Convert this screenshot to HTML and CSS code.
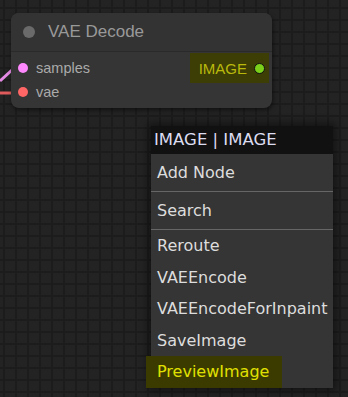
FILE: index.html
```html
<!DOCTYPE html>
<html>
<head>
<meta charset="utf-8">
<link rel="stylesheet" href="styles.css">
</head>
<body>
<div class="canvas">
  <svg class="wires" width="348" height="397" viewBox="0 0 348 397">
    <path d="M0 81 L12 70" stroke="#e58ae5" stroke-width="3" fill="none"/>
    <path d="M0 93 L12 93" stroke="#e05c5c" stroke-width="3" fill="none"/>
  </svg>
  <div class="node">
    <div class="node-title">
      <span class="title-dot"></span>
      <span class="title-text">VAE Decode</span>
    </div>
    <div class="node-body">
      <div class="slot-row">
        <div class="slot-in"><span class="dot dot-pink"></span><span>samples</span></div>
        <div class="slot-out"><span class="out-label">IMAGE</span><span class="dot dot-green"></span></div>
      </div>
      <div class="slot-row">
        <div class="slot-in"><span class="dot dot-red"></span><span>vae</span></div>
      </div>
    </div>
  </div>
  <div class="menu">
    <div class="menu-title">IMAGE | IMAGE</div>
    <div class="menu-item sep">Add Node</div>
    <div class="menu-item sep">Search</div>
    <div class="menu-item">Reroute</div>
    <div class="menu-item">VAEEncode</div>
    <div class="menu-item">VAEEncodeForInpaint</div>
    <div class="menu-item">SaveImage</div>
    <div class="menu-item hl">PreviewImage</div>
  </div>
</div>
</body>
</html>
```
FILE: styles.css
```css
html, body {
  margin: 0;
  padding: 0;
}
body {
  width: 348px;
  height: 397px;
  overflow: hidden;
  background: #222;
}
.canvas {
  position: relative;
  width: 348px;
  height: 397px;
  background-color: #232323;
  background-image:
    linear-gradient(to right, #1c1c1c 0, #1c1c1c 2px, transparent 2px),
    linear-gradient(to bottom, #1c1c1c 0, #1c1c1c 2px, transparent 2px);
  background-size: 12px 12px;
  background-position: 3px 7px;
  font-family: "Liberation Sans", Arial, sans-serif;
}
.wires {
  position: absolute;
  left: 0;
  top: 0;
}
.node {
  position: absolute;
  left: 11px;
  top: 13px;
  width: 261px;
  height: 95px;
  background: #353535;
  border-radius: 8px;
  box-shadow: 1px 2px 4px rgba(0,0,0,0.5);
  overflow: hidden;
}
.node-title {
  height: 38px;
  display: flex;
  align-items: center;
  border-bottom: 1px solid #2a2a2a;
  background: #333;
}
.title-dot {
  width: 12px;
  height: 12px;
  border-radius: 50%;
  background: #6a6a6a;
  margin-left: 12px;
}
.title-text {
  margin-left: 13px;
  font-size: 17px;
  color: #999;
}
.node-body {
  padding-top: 4px;
}
.slot-row {
  height: 24px;
  display: flex;
  align-items: center;
  justify-content: space-between;
  font-size: 14.5px;
  color: #aaa;
}
.slot-in {
  display: flex;
  align-items: center;
}
.dot {
  width: 10px;
  height: 10px;
  border-radius: 50%;
  display: inline-block;
  box-sizing: border-box;
}
.dot-pink { background: #ff88ff; margin-left: 7px; margin-right: 8px; }
.dot-red { background: #ff6666; margin-left: 7px; margin-right: 8px; }
.dot-green { background: #7bd11a; border: 1.5px solid #111; width: 11px; height: 11px; margin-left: 7px; margin-right: 4px; }
.slot-out {
  display: flex;
  align-items: center;
  height: 30px;
  padding-left: 9px;
  margin-right: 3px;
  background: #3d3d06;
  color: #b9b90c;
  font-size: 15px;
}
.menu {
  position: absolute;
  left: 151px;
  top: 126px;
  width: 182px;
  background: #353535;
  box-shadow: 0 0 8px 3px rgba(0,0,0,0.45);
  font-family: "DejaVu Sans", sans-serif;
  font-size: 16px;
}
.menu-title {
  height: 28px;
  line-height: 28px;
  background: #111;
  color: #dcdcf0;
  padding-left: 3px;
  font-size: 16.5px;
}
.menu-item {
  height: 31.5px;
  line-height: 31.5px;
  padding-left: 6px;
  color: #ddd;
  white-space: nowrap;
}
.menu-item.sep {
  height: 37px;
  line-height: 37px;
  border-bottom: 1px solid #666;
}
.menu-item.hl {
  color: #e0e000;
  background: #3b3b00;
  margin-left: -5px;
  padding-left: 11px;
  width: 125px;
}
```
